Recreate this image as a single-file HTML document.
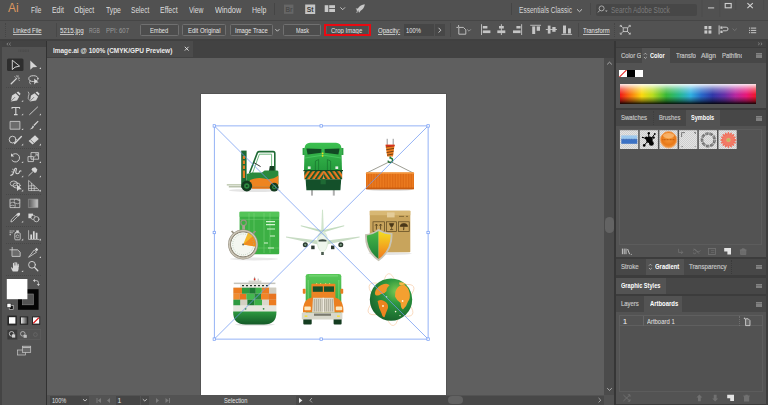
<!DOCTYPE html>
<html>
<head>
<meta charset="utf-8">
<title>Image.ai</title>
<style>
html,body{margin:0;padding:0;}
body{width:768px;height:405px;overflow:hidden;background:#525252;position:relative;font-family:"Liberation Sans",sans-serif;font-size:8px;color:#dcdcdc;}
.a{position:absolute;}
.t{position:absolute;white-space:nowrap;line-height:10px;transform-origin:0 0;}
.m{font-size:8.400px;color:#dedede;top:4.800px;}
.c{font-size:7.200px;color:#e6e6e6;top:25.500px;}
.btn{position:absolute;top:24.200px;height:11.400px;border:0.700px solid #707070;border-radius:1.500px;background:#4d4d4d;box-sizing:border-box;}
.u{text-decoration:underline;text-decoration-thickness:0.600px;text-underline-offset:0.500px;text-decoration-color:#bcbcbc;}
.ptab{transform-origin:0 0;position:absolute;font-size:7.4px;color:#c4c4c4;-webkit-text-stroke:0.2px #c4c4c4;white-space:nowrap;line-height:10px;}
.ptab.on{color:#fff;font-weight:bold;-webkit-text-stroke:0;}
.mi{width:6px;height:4.500px;background:linear-gradient(to bottom,#838383 0,#838383 1.200px,#6e6e6e 1.200px,#6e6e6e 1.700px,#808080 1.700px,#808080 2.800px,#6e6e6e 2.800px,#6e6e6e 3.300px,#808080 3.300px);}
</style>
</head>
<body>
<!-- menu bar -->
<div class="a" style="left:0;top:0;width:768px;height:20px;background:#515151;"></div>
<div class="t" style="left:7.700px;top:0.200px;font-size:13.200px;line-height:16px;color:#dc9660;transform:scale(0.9,1);">Ai</div>
<div class="t m" style="left:30.800px;transform:scaleX(0.770);">File</div>
<div class="t m" style="left:52.100px;transform:scaleX(0.824);">Edit</div>
<div class="t m" style="left:74.200px;transform:scaleX(0.838);">Object</div>
<div class="t m" style="left:105.600px;transform:scaleX(0.815);">Type</div>
<div class="t m" style="left:131.300px;transform:scaleX(0.786);">Select</div>
<div class="t m" style="left:160.400px;transform:scaleX(0.828);">Effect</div>
<div class="t m" style="left:189px;transform:scaleX(0.805);">View</div>
<div class="t m" style="left:214.500px;transform:scaleX(0.883);">Window</div>
<div class="t m" style="left:251.500px;transform:scaleX(0.830);">Help</div>
<div class="a" style="left:274.200px;top:3px;width:1px;height:12px;background:#454545;"></div>
<div class="a" style="left:511px;top:3px;width:1px;height:12px;background:#454545;"></div>
<div class="a" style="left:589.500px;top:3px;width:1px;height:12px;background:#484848;"></div>
<div class="t m" style="left:518.900px;color:#d4d4d4;transform:scaleX(0.785);">Essentials Classic</div>
<div class="a" style="left:596px;top:3.500px;width:101px;height:12px;background:#474747;border-radius:2px;"></div>
<div class="t m" style="left:611px;color:#7c7c7c;transform:scaleX(0.775);">Search Adobe Stock</div>
<svg class="a" style="left:270px;top:0;" width="498" height="20" viewBox="270 0 498 20">
<!-- Br -->
<rect x="284" y="4.600" width="9.400" height="9.200" fill="#666"/>
<!-- St -->
<rect x="305.200" y="4.500" width="10" height="9.500" fill="#c4c4c4"/>
<!-- layout -->
<rect x="324.700" y="5.200" width="3.600" height="6.800" fill="#c8c8c8"/><rect x="329.200" y="5.200" width="5.800" height="2.900" fill="#c8c8c8"/><rect x="329.200" y="9" width="5.800" height="3" fill="#c8c8c8"/>
<path d="M340.400 7.400l2.300 2.300l2.300-2.300M577 9.300l2.500 2.400l2.500-2.400" fill="none" stroke="#d0d0d0" stroke-width="0.900"/>
<!-- rocket -->
<path d="M364.800 4.200 Q360.400 4.600 357.800 8.600 L355.600 8.400 L357 10 L356.400 11.600 L358.600 10.600 L359 13 L360.600 10.800 Q364.400 8.600 364.800 4.200 Z" fill="#c8c8c8"/>
<path d="M356.600 12.800 L358.400 11" stroke="#c8c8c8" stroke-width="0.900"/>
<!-- search icon -->
<circle cx="601.600" cy="8.400" r="2.500" fill="none" stroke="#b4b4b4" stroke-width="0.900"/><path d="M599.800 10.400l-1.800 2" stroke="#b4b4b4" stroke-width="1"/><path d="M605 10.600h2.600l-1.300 1.500z" fill="#b4b4b4"/>
<!-- window controls -->
<path d="M702 0v17M719.800 0v17M735.700 0v10M763.600 0v10" stroke="#4a4a4a" stroke-width="0.600"/>
<rect x="708" y="7" width="6.200" height="1.700" fill="#9c9c9c"/>
<rect x="725.200" y="3.500" width="6" height="4.300" fill="none" stroke="#cfcfcf" stroke-width="1.100"/>
<path d="M747.400 3.200l5.400 5M752.800 3.200l-5.400 5" stroke="#d4d4d4" stroke-width="1.100"/>
</svg>
<div class="t" style="left:285.400px;top:4.600px;font-size:6.400px;line-height:9px;color:#4a4a4a;font-weight:bold;">Br</div>
<div class="t" style="left:306.800px;top:4.600px;font-size:6.800px;line-height:9px;color:#3a3a3a;font-weight:bold;">St</div>
<div class="a" style="left:0;top:19.500px;width:768px;height:1px;background:#464646;"></div>
<!-- control bar -->
<div class="a" style="left:0;top:20.500px;width:768px;height:19.500px;background:#525252;"></div>
<div class="a" style="left:5px;top:23px;width:0;height:14px;border-left:1px dotted #454545;"></div>
<div class="t c u" style="left:12.600px;transform:scaleX(0.823);">Linked File</div>
<div class="a" style="left:55.500px;top:23px;width:1px;height:14px;background:#484848;"></div>
<div class="t c u" style="left:60px;transform:scaleX(0.859);">5215.jpg</div>
<div class="t c" style="left:89.200px;color:#9c9c9c;transform:scaleX(0.693);">RGB</div>
<div class="t c" style="left:106.200px;color:#9c9c9c;transform:scaleX(0.834);">PPI: 607</div>
<div class="btn" style="left:140px;width:38.500px;"></div>
<div class="btn" style="left:182px;width:43.500px;"></div>
<div class="btn" style="left:229.500px;width:43.800px;"></div>
<div class="btn" style="left:283.400px;width:38px;"></div>
<div class="btn" style="left:326px;width:42.500px;border-color:#5c5c5c;"></div>
<div class="t c" style="left:150px;transform:scaleX(0.803);">Embed</div>
<div class="t c" style="left:187.500px;transform:scaleX(0.830);">Edit Original</div>
<div class="t c" style="left:235px;transform:scaleX(0.821);">Image Trace</div>
<div class="t c" style="left:296px;transform:scaleX(0.756);">Mask</div>
<div class="t c" style="left:331px;transform:scaleX(0.831);">Crop Image</div>
<div class="a" style="left:324px;top:23.800px;width:46.600px;height:12.600px;border:2.100px solid #e80a12;box-sizing:border-box;"></div>
<div class="t c u" style="left:378px;transform:scaleX(0.842);">Opacity:</div>
<div class="a" style="left:404px;top:24.400px;width:29.800px;height:11.800px;background:#464646;"></div>
<div class="t c" style="left:406.200px;transform:scaleX(0.805);">100%</div>
<div class="a" style="left:434.700px;top:24.400px;width:10.200px;height:11.800px;background:#474747;"></div>
<div class="a" style="left:449.500px;top:23px;width:1px;height:14px;background:#484848;"></div>
<div class="a" style="left:578.200px;top:23px;width:1px;height:14px;background:#484848;"></div>
<div class="a" style="left:613.500px;top:23px;width:0;height:14px;border-left:1px dotted #454545;"></div>
<div class="t c u" style="left:583px;transform:scaleX(0.819);">Transform</div>
<svg class="a" style="left:270px;top:20px;" width="498" height="20" viewBox="270 20 498 20">
<g fill="none" stroke="#d4d4d4" stroke-width="0.900">
<path d="M275.400 29.200l2 2l2-2"/>
<path d="M438.600 27.800l2.200 2.400l-2.200 2.400"/>
<path d="M467.200 29.400l1.800 1.800l1.800-1.800" stroke="#a8a8a8" stroke-width="0.800"/>
</g>
<!-- right control icons -->
<g fill="none" stroke="#c8c8c8" stroke-width="0.900">
<rect x="623.200" y="27.800" width="4.400" height="3.800"/>
<path d="M620.400 25.600l2.200 1.800M630.200 25.600l-2.200 1.800M620.400 34l2.200-1.800M630.200 34l-2.200-1.800" stroke-width="1"/>
<path d="M620.200 27v-1.600h1.800M630.400 27v-1.600h-1.800M620.200 32.600v1.600h1.800M630.400 32.600v1.600h-1.800" stroke-width="0.700"/>
<path d="M732.600 28.600l2.100 2l2.100-2" stroke="#7a7a7a" stroke-width="0.800"/>
<path d="M723 27.200h3.200a1.800 1.800 0 0 1 0 3.600h-3.200" stroke-width="1"/>
</g>
<g fill="#c8c8c8">
<rect x="704.400" y="26" width="2.900" height="3.200"/><rect x="708.500" y="26" width="2.900" height="3.200"/><rect x="704.400" y="30.400" width="2.900" height="3.200"/><rect x="708.500" y="30.400" width="2.900" height="3.200"/>
<rect x="718.600" y="25.400" width="1" height="9"/><rect x="720.400" y="26.400" width="2.200" height="2.400"/><rect x="720.400" y="30.600" width="2.200" height="2.400"/>
<rect x="749" y="27.600" width="1" height="1"/><rect x="749" y="29.900" width="1" height="1"/><rect x="749" y="32.200" width="1" height="1"/>
<rect x="750.800" y="27.600" width="5.400" height="1"/><rect x="750.800" y="29.900" width="5.400" height="1"/><rect x="750.800" y="32.200" width="5.400" height="1"/>
</g>
<!-- isolate/crop icon -->
<g fill="none" stroke="#c8c8c8" stroke-width="0.900"><path d="M458.600 25v2M456.400 27.400h2"/><path d="M458.800 27.400h4.600l2.400 2.400v4.400h-7z"/></g>
<!-- align icons -->
<g fill="#c4c4c4">
<rect x="481" y="24.200" width="0.900" height="10.800"/><rect x="482.800" y="26" width="4.600" height="2.500"/><rect x="482.800" y="30.400" width="7.600" height="2.700"/>
<rect x="500.900" y="24.200" width="0.900" height="10.800"/><rect x="499" y="26" width="4.800" height="2.500"/><rect x="497.300" y="30.400" width="8" height="2.700"/>
<rect x="521.200" y="24.200" width="0.900" height="10.800"/><rect x="516.400" y="26" width="4.200" height="2.500"/><rect x="513" y="30.400" width="7.600" height="2.700"/>
<rect x="530.200" y="24.800" width="10.800" height="0.900"/><rect x="532.200" y="26.400" width="3" height="7.600"/><rect x="536.700" y="26.400" width="3.300" height="4.400"/>
<rect x="545.800" y="29.100" width="11.200" height="0.900"/><rect x="547.800" y="25.600" width="2.700" height="8"/><rect x="552.300" y="27" width="3.300" height="4.800"/>
<rect x="561.500" y="33.900" width="10.600" height="0.900"/><rect x="563" y="25.500" width="3" height="8"/><rect x="568" y="28.400" width="2.900" height="5.100"/>
</g>
</svg>
<div class="a" style="left:0;top:39.400px;width:768px;height:1.600px;background:#404040;"></div>

<!-- left toolbar -->
<div class="a" style="left:0;top:41px;width:47px;height:364px;background:#535353;"></div>
<div class="a" style="left:0;top:41px;width:2.400px;height:364px;background:#444444;"></div>
<div class="a" style="left:2.400px;top:41px;width:43.600px;height:6px;background:#434343;"></div>
<div class="a" style="left:45.900px;top:41px;width:1.100px;height:364px;background:#323232;"></div>
<svg class="a" style="left:0;top:0;" width="48" height="405" viewBox="0 0 48 405" id="tools">
<g fill="none" stroke="#d6d6d6" stroke-width="1" stroke-linecap="round" stroke-linejoin="round">
<!-- collapse -->
<path d="M8 43 L6.800 44.100 L8 45.200 M10.400 43 L9.200 44.100 L10.400 45.200" stroke="#a4a4a4" stroke-width="0.600"/>
<!-- grip -->
<path d="M18.5 50 H29.5 M18.5 51.4 H29.5" stroke="#474747" stroke-width="0.8" stroke-dasharray="0.8 0.8" stroke-linecap="butt"/>
<!-- separators -->
<g stroke="#444" stroke-width="0.8" stroke-dasharray="1 1" stroke-linecap="butt">
<path d="M6 87.5H41.5M6 148.5H41.5M6 194.5H41.5M6 226.5H41.5M6 243.5H41.5M6 275.5H41.5"/>
</g>
<!-- selection (active) -->
<rect x="7" y="58.5" width="16.5" height="12.5" rx="1.5" fill="#2e2e2e" stroke="none"/>
<path d="M12.3 60.6 V69.6 L15 67.2 L19.2 66.2 Z" stroke="#e0e0e0" stroke-width="0.9"/>
<!-- direct selection -->
<path d="M30.3 60.4 V69.8 L33 67.2 L37.2 67 Z" fill="#d6d6d6" stroke="none"/>
<!-- magic wand -->
<path d="M11.2 83.8 L16.4 78.6" stroke-width="1.3"/>
<path d="M18 75.6v1.6M19.6 78.2h-1.4M14.8 76.6l.9.9M19.4 80.6l-.8-.8M16.6 75.8l.4.8" stroke-width="0.7"/>
<!-- lasso -->
<ellipse cx="33.4" cy="78.6" rx="4.6" ry="2.9" stroke-width="0.9"/>
<path d="M30 80.8 q-1.4 1.6 .4 3.2" stroke-width="0.8"/>
<path d="M34.2 78.4 v6 l1.6 -1.6 l2.8 -.2 Z" fill="#d6d6d6" stroke="none"/>
<!-- pen -->
<path d="M10.8 101.4 l1.2 -6 l3.6 -2.2 l3.6 3.6 l-2.2 3.6 Z" fill="#d6d6d6" stroke="none"/>
<path d="M16.6 92.4 l1.6 -1 l2.4 2.4 l-1 1.6 Z" fill="#d6d6d6" stroke="none"/>
<path d="M11 101.2 l3.8 -3.8" stroke="#535353" stroke-width="0.7"/>
<!-- curvature -->
<path d="M29.8 101.4 l1.2 -6 l3.6 -2.2 l3.6 3.6 l-2.2 3.6 Z" fill="#d6d6d6" stroke="none"/>
<path d="M35.6 92.4 l1.6 -1 l2.4 2.4 l-1 1.6 Z" fill="#d6d6d6" stroke="none"/>
<path d="M30 101.2 l3.8 -3.8" stroke="#535353" stroke-width="0.7"/>
<path d="M28.4 92 q1.6 2 0 4.200 q-1.200 2.400 1.400 4.400" stroke-width="0.7"/>
<!-- type -->
<path d="M12 108.800 V107.500 H19.600 V108.800 M15.800 107.500 V114.400 M14 114.600 H17.600" stroke-width="1.1" stroke-linecap="butt"/>
<!-- line -->
<path d="M29.600 114.600 L37.600 107" stroke-width="0.9"/>
<!-- rect -->
<rect x="10.500" y="121.400" width="9.400" height="7.800" fill="#6c6c6c" stroke-width="0.8"/>
<!-- brush -->
<path d="M33.400 125 L37.800 120.800 L38.600 121.600 L34.400 126 Z" fill="#d6d6d6" stroke="none"/>
<path d="M32.800 125.400 l1.400 1.400 q-1.400 2.600 -4.600 2.600 q2.400 -1.400 3.200 -4 Z" fill="#d6d6d6" stroke="none"/>
<!-- shaper -->
<circle cx="12.600" cy="139.600" r="3.400" stroke-width="0.9"/>
<path d="M14.600 143.400 L21.400 136.400" stroke-width="1.400"/>
<!-- eraser -->
<path d="M28.600 141 L35 135.200 L38.800 139 L32.600 144.600 Z" fill="#d6d6d6" stroke="none"/>
<path d="M30.400 139.600 L34 143.200" stroke="#535353" stroke-width="0.7"/>
<!-- rotate -->
<path d="M12.400 154.800 A4.200 4.200 0 1 1 12 160.400" stroke-width="0.9"/>
<path d="M11 153.200 V156.400 H14.200 Z" fill="#d6d6d6" stroke="none"/>
<!-- scale -->
<rect x="31.400" y="152.600" width="7.200" height="6.600" stroke-width="0.8"/>
<rect x="28.400" y="156.600" width="5" height="5" stroke-width="0.8"/>
<path d="M34.400 157 L37.200 154.200 M35.400 154 H37.400 V156" stroke-width="0.7"/>
<!-- width/warp -->
<path d="M10.800 175.400 q2.400 -.6 3 -3.600 q.6 -3.600 2 -3.600 q1 0 .2 2.600 q-.8 3 1.400 3 q1.600 0 2 -1.800 q.4 -1.400 1.600 -1" stroke-width="1.100"/>
<path d="M12.400 169.200 l2.200 1.400 M11.800 171.800 l1.800 .4" stroke-width="0.7"/>
<!-- pin -->
<path d="M32.400 168 L35.200 167.200 L37.400 169.600 L36.400 172.200 L34.800 173 L31.400 169.800 Z" fill="#d6d6d6" stroke="none"/>
<path d="M32.600 172 L28.800 175.600" stroke-width="0.9"/>
<!-- shape builder -->
<ellipse cx="13.800" cy="183.600" rx="3.600" ry="2.600" stroke-width="0.8"/>
<ellipse cx="16.600" cy="185.400" rx="3.600" ry="2.600" stroke-width="0.8"/>
<path d="M17 184.600 V191 L18.800 189.400 L21.800 189.200 Z" fill="#d6d6d6" stroke="none"/>
<!-- perspective -->
<path d="M28.600 180.800 V190.600 H39.200 Z M28.600 186 L33.800 185.600 M31.400 183.400 V190.600 M34.200 186 V190.600 M28.600 188.400 H36.800" stroke-width="0.7"/>
<!-- mesh -->
<rect x="10.400" y="199.200" width="9.400" height="8.400" stroke-width="0.8"/>
<path d="M10.400 203 q2.400 -1.600 4.600 0 q2.400 1.600 4.800 0 M14.800 199.200 q-1.400 2.200 0 4.200 q1.400 2 0 4.200 M10.400 205.600 q2 -.8 4 0 M16.600 199.200 q1 1.600 3.200 1.600" stroke-width="0.6"/>
<!-- gradient tool -->
<rect x="28.800" y="199.200" width="9.200" height="8.400" fill="url(#gt)" stroke="#9a9a9a" stroke-width="0.6"/>
<!-- eyedropper -->
<path d="M11 221.600 L11.400 219.800 L16.200 215 L17.600 216.400 L12.800 221.200 Z" stroke-width="0.8"/>
<path d="M16 214.200 L18.400 216.600 L20 215 Q20.600 213.400 19.400 212.800 Q18 212.600 17.600 213.200 Z" fill="#d6d6d6" stroke="none"/>
<!-- blend -->
<rect x="28.400" y="213.600" width="4.600" height="4.600" fill="#d6d6d6" stroke="none"/>
<circle cx="33.200" cy="217.400" r="2.200" fill="#535353" stroke-width="0.7"/>
<circle cx="36.400" cy="219.200" r="2.600" fill="#535353" stroke-width="0.8"/>
<!-- symbol sprayer -->
<rect x="14.800" y="232.800" width="5.400" height="7" rx="0.800" stroke-width="0.8"/>
<rect x="16.200" y="230.400" width="2.600" height="2.400" fill="#d6d6d6" stroke="none"/>
<path d="M18.600 235.400 a1.400 1.400 0 1 0 0 1.800" stroke-width="0.7"/>
<path d="M10.200 231h.01M12 231h.01M13.800 231h.01M10.200 232.800h.01M12 232.800h.01M10.200 234.600h.01" stroke-width="1.100" stroke-linecap="square"/>
<!-- graph -->
<path d="M28.600 230.600 V239.400 H39.200" stroke-width="0.7"/>
<path d="M31.200 239 V234.400 M33.800 239 V231.200 M36.600 239 V232.800" stroke-width="1.700" stroke-linecap="butt"/>
<!-- artboard -->
<path d="M12.200 247.400 V249.400 M9.800 249.800 H12" stroke-width="0.8"/>
<path d="M12.400 249.800 H17.600 L20.200 252.200 V256.400 H12.400 Z" fill="#6c6c6c" stroke-width="0.8"/>
<!-- slice -->
<path d="M28.800 257 L34.200 250 L36.200 252 Z" stroke-width="0.8"/>
<path d="M34.800 249.400 L36.400 247.800 L38.200 249.600 L36.800 251.400 Z" fill="#d6d6d6" stroke="none"/>
<!-- hand -->
<path d="M12.800 271.400 Q11.600 269.600 11 267.800 Q11.200 267 12 267.400 L13 268.800 V265.400 H18.600 V268.400 Q18.600 270.200 17.600 271.400 Z" fill="#d6d6d6" stroke="none"/>
<path d="M13.500 266 V263.400 M15.100 266 V262.500 M16.700 266 V262.900 M18.200 266.400 V264.200" stroke-width="1.100"/>
<!-- zoom -->
<circle cx="32" cy="264.800" r="3.400" stroke-width="0.9"/>
<path d="M34.600 267.400 L37.800 270.800" stroke-width="1.300"/>
</g>
<!-- corner triangles -->
<g fill="#cfcfcf">
<path d="M41 69h-1.800L41 67.200Z M23.200 101.800h-1.800l1.800-1.800Z M23.200 115.200h-1.800l1.800-1.800Z M41 115.200h-1.800l1.800-1.800Z M23.200 130h-1.800l1.800-1.800Z M41 130h-1.800l1.800-1.800Z M23.200 145.400h-1.800l1.800-1.800Z M41 145.400h-1.800l1.800-1.800Z M23.200 163h-1.800l1.800-1.800Z M41 163h-1.800l1.800-1.800Z M23.200 177.200h-1.800l1.800-1.800Z M41 177.200h-1.800l1.800-1.800Z M23.200 191.400h-1.800l1.800-1.800Z M41 191.400h-1.800l1.800-1.800Z M23.200 222.600h-1.800l1.800-1.800Z M23.200 240.400h-1.800l1.800-1.800Z M41 240.400h-1.800l1.800-1.800Z M41 258h-1.800l1.800-1.800Z M23.200 272h-1.800l1.800-1.800Z"/>
</g>
<defs>
<linearGradient id="gt" x1="0" x2="1" y1="0" y2="0"><stop offset="0" stop-color="#5a5a5a"/><stop offset="1" stop-color="#c8c8c8"/></linearGradient>
<linearGradient id="gb" x1="0" x2="1" y1="0" y2="0"><stop offset="0" stop-color="#e8e8e8"/><stop offset="1" stop-color="#4a4a4a"/></linearGradient>
</defs>
<!-- fill/stroke -->
<rect x="18" y="289.200" width="20.600" height="20.600" fill="#050505"/>
<rect x="22.500" y="294" width="10.800" height="10.800" fill="#535353" stroke="#8a8a8a" stroke-width="0.6"/>
<rect x="6.800" y="279" width="20.600" height="20.200" fill="#ffffff"/>
<path d="M33.400 280.600 h3 a2 2 0 0 1 2 2 v2.600" fill="none" stroke="#d0d0d0" stroke-width="0.8"/>
<path d="M33 280.600 l2 -1.600 v3.200 Z M38.400 286 l-1.600 -2 h3.200 Z" fill="#d0d0d0"/>
<rect x="9.200" y="305.600" width="4" height="4" fill="#111" stroke="#ddd" stroke-width="0.6"/>
<rect x="7" y="303.400" width="4" height="4" fill="#fff" stroke="#222" stroke-width="0.5"/>
<!-- color buttons -->
<rect x="7.400" y="315.600" width="9.400" height="9.800" fill="#262626"/>
<rect x="9" y="317.200" width="6.400" height="6.400" fill="#fff"/>
<rect x="19.800" y="316.400" width="8.400" height="8.400" fill="#262626"/>
<rect x="21" y="317.400" width="6" height="6.200" fill="url(#gb)"/>
<rect x="32" y="316.400" width="8.200" height="8.400" fill="#262626"/>
<rect x="33" y="317.400" width="6.200" height="6.200" fill="#fff"/>
<path d="M33.200 323.400 L39 317.600" stroke="#e01010" stroke-width="1.300"/>
<!-- draw modes -->
<rect x="7.300" y="329.600" width="33.400" height="10" fill="none" stroke="#5f5f5f" stroke-width="0.6"/>
<rect x="7.300" y="329.600" width="10.400" height="10" fill="#3a3a3a"/>
<path d="M17.700 329.600v10M29 329.600v10" stroke="#5f5f5f" stroke-width="0.5"/>
<circle cx="11.600" cy="333.800" r="2.300" fill="none" stroke="#d0d0d0" stroke-width="0.8"/>
<rect x="12" y="334.400" width="3.200" height="3.200" fill="#d0d0d0"/>
<circle cx="22.800" cy="333.800" r="2.300" fill="none" stroke="#c0c0c0" stroke-width="0.8"/>
<rect x="23.600" y="334.800" width="3.200" height="3" fill="#c0c0c0"/>
<circle cx="35.400" cy="334.600" r="1.900" fill="none" stroke="#6a6a6a" stroke-width="0.7"/>
<!-- screen mode -->
<rect x="17.500" y="350" width="8" height="5" fill="#5e5e5e" stroke="#c8c8c8" stroke-width="0.7"/>
<rect x="22.500" y="346.200" width="8.200" height="6.400" fill="#6a6a6a" stroke="#c8c8c8" stroke-width="0.7"/>
<path d="M22.500 347.400h8.200" stroke="#c8c8c8" stroke-width="0.9"/>
</svg>

<!-- doc tab bar -->
<div class="a" style="left:47px;top:41px;width:568px;height:17px;background:#424242;"></div>
<div class="a" style="left:47px;top:41px;width:146px;height:16px;background:#4b4b4b;"></div>
<div class="t" style="left:53px;top:45.500px;font-size:7px;font-weight:bold;color:#ececec;transform:scaleX(0.922);">Image.ai @ 100% (CMYK/GPU Preview)</div>
<svg class="a" style="left:184px;top:46px;" width="6" height="6" viewBox="0 0 6 6"><path d="M.8 .8L4.600 4.600M4.600 .8L.8 4.600" stroke="#e6e6e6" stroke-width="0.9"/></svg>

<!-- canvas -->
<div class="a" style="left:47px;top:57.500px;width:557.200px;height:337.500px;background:#5f5f5f;"></div>
<div class="a" style="left:201.200px;top:93.800px;width:244.800px;height:300.900px;background:#fff;box-shadow:0 0 0 0.500px #4a4a4a;"></div>

<svg class="a" style="left:201px;top:94px;" width="245" height="301" viewBox="201 94 245 301">
<defs>
<linearGradient id="cont" x1="0" x2="1"><stop offset="0" stop-color="#f08428"/><stop offset="1" stop-color="#e06c14"/></linearGradient>
<pattern id="ribs" width="1.600" height="4" patternUnits="userSpaceOnUse"><rect width="1.600" height="4" fill="#ec7c20"/><rect width="0.600" height="4" fill="#d86410"/></pattern>
<pattern id="chev" width="5" height="8.500" patternUnits="userSpaceOnUse" patternTransform="skewX(-35)"><rect width="5" height="8.500" fill="#f07820"/><rect width="2.400" height="8.500" fill="#1a5a2c"/></pattern>
<pattern id="chev2" width="5" height="8.500" patternUnits="userSpaceOnUse" patternTransform="skewX(35)"><rect width="5" height="8.500" fill="#f07820"/><rect width="2.400" height="8.500" fill="#1a5a2c"/></pattern>
<radialGradient id="globe" cx="0.620" cy="0.300" r="0.800"><stop offset="0" stop-color="#7cc850"/><stop offset="0.350" stop-color="#2e9a40"/><stop offset="1" stop-color="#145a28"/></radialGradient>
<linearGradient id="shR" x1="0" x2="0" y1="0" y2="1"><stop offset="0" stop-color="#f4e020"/><stop offset="1" stop-color="#f07820"/></linearGradient>
<linearGradient id="shL" x1="0" x2="0" y1="0" y2="1"><stop offset="0" stop-color="#48b848"/><stop offset="1" stop-color="#1e8038"/></linearGradient>
<linearGradient id="hull" x1="0" x2="0" y1="0" y2="1"><stop offset="0" stop-color="#2e9a40"/><stop offset="1" stop-color="#145a28"/></linearGradient>
<linearGradient id="trl" x1="0" x2="0" y1="0" y2="1"><stop offset="0" stop-color="#58c858"/><stop offset="1" stop-color="#2ea03c"/></linearGradient>
<linearGradient id="trn" x1="0" x2="0" y1="0" y2="1"><stop offset="0" stop-color="#3cc050"/><stop offset="1" stop-color="#249a3c"/></linearGradient>
<radialGradient id="sw" cx="0.500" cy="0.500" r="0.500"><stop offset="0.780" stop-color="#f4f6f0"/><stop offset="0.820" stop-color="#8a8474"/><stop offset="0.920" stop-color="#d4cec0"/><stop offset="1" stop-color="#8c8676"/></radialGradient>
</defs>

<!-- forklift -->
<g>
<ellipse cx="255" cy="190.400" rx="26" ry="1.600" fill="#d8d8d8" opacity="0.700"/>
<rect x="226.800" y="184.200" width="16" height="1.300" fill="#b8c4a8"/>
<rect x="228.800" y="186.200" width="14" height="1.200" fill="#a8b498"/>
<rect x="241.200" y="150.600" width="5.400" height="37" fill="#1e6a34"/>
<rect x="242.800" y="156" width="2.200" height="22" fill="#e87c20"/>
<rect x="242.800" y="159" width="2.200" height="1.500" fill="#1e6a34"/><rect x="242.800" y="164" width="2.200" height="1.500" fill="#1e6a34"/><rect x="242.800" y="169" width="2.200" height="1.500" fill="#1e6a34"/>
<path d="M249.600 173 L257.400 152.600 Q258 151.600 259.400 151.600 H273.200 Q274.800 151.600 274.800 153.400 V171" fill="none" stroke="#1e6a34" stroke-width="1.600"/>
<path d="M252.600 173 L259.400 154.200 H271.600 V170" fill="none" stroke="#4ea860" stroke-width="0.800"/>
<path d="M253.800 162.600 L260.600 166.600" stroke="#222" stroke-width="0.900"/>
<path d="M269.800 166 h4.400 v6 h-5.400 z" fill="#163e22"/>
<path d="M246.600 174 L252 172.400 H262 L264.600 170.400 H277.200 Q278.400 170.400 278.400 172 V184 Q278.400 186.400 276 186.400 H246.600 Z" fill="#2a8a3c"/>
<path d="M250 180 Q258 176.800 264 178.600 Q272 180.600 278.400 175.600 V184 Q278.400 186.400 276 186.400 H248.400 Z" fill="#ee8420"/>
<path d="M252 186.400 H270 V188.800 H252 Z" fill="#e07418"/>
<circle cx="246.800" cy="186" r="5.400" fill="#143c20"/><circle cx="246.800" cy="186" r="2.700" fill="#2e8a40"/><circle cx="246.800" cy="186" r="1.100" fill="#143c20"/>
<circle cx="274.200" cy="187.200" r="4.400" fill="#143c20"/><circle cx="274.200" cy="187.200" r="2.100" fill="#2e8a40"/><circle cx="274.200" cy="187.200" r="0.900" fill="#143c20"/>
</g>

<!-- train -->
<g>
<rect x="311" y="189" width="2" height="6.600" fill="#b0b0b0"/><rect x="332.800" y="189" width="2" height="6.600" fill="#b0b0b0"/>
<path d="M304 170.800 L304.600 148 Q305 143 310 142.800 H336 Q341 143 341.400 148 L342 170.800 Z" fill="url(#trn)"/>
<rect x="302.600" y="148" width="2.200" height="7" fill="#2aa040"/><rect x="341.200" y="148" width="2.200" height="7" fill="#2aa040"/>
<path d="M306.400 148.400 L321.400 149 V152.800 L307.600 154.600 Z" fill="#124a24"/>
<path d="M339.600 148.400 L324.600 149 V152.800 L338.400 154.600 Z" fill="#124a24"/>
<path d="M315.400 170.800 V161 L318.600 159.600 V170.800 M330.600 170.800 V161 L327.400 159.600 V170.800" fill="none" stroke="#1a7a30" stroke-width="0.800"/>
<path d="M305 158 L321 155.400 H325 L341 158" fill="none" stroke="#52d068" stroke-width="0.700"/>
<circle cx="322.600" cy="153.400" r="0.900" fill="#f4e020"/><circle cx="322.600" cy="155.800" r="0.900" fill="#f4e020"/>
<rect x="307.800" y="166.400" width="2.800" height="2.600" fill="#e8f0e8"/><rect x="335.400" y="166.400" width="2.800" height="2.600" fill="#e8f0e8"/>
<rect x="304.200" y="170.800" width="19" height="8.500" fill="url(#chev)"/>
<rect x="323.200" y="170.800" width="19" height="8.500" fill="url(#chev2)"/>
<rect x="303.400" y="170" width="39.600" height="1.200" fill="#124a24"/>
<path d="M305.600 179.300 H341.200 L340.400 190.200 H306.400 Z" fill="#14502a"/>
<rect x="320.600" y="179.300" width="5.200" height="5" fill="#1e6a34"/>
</g>

<!-- crane container -->
<g>
<path d="M387.200 138.800 V145 M393.200 138.800 V145" stroke="#8a8a8a" stroke-width="0.900"/>
<path d="M385.600 144.800 H394.600 L393 156.400 H387.200 Z" fill="#ec7c20"/>
<path d="M385.800 147 L394.400 145.600 M386.200 149.800 L394 148.400 M386.600 152.600 L393.600 151.200 M387 155.200 L393.200 154" stroke="#6a3c10" stroke-width="0.900"/>
<path d="M385.600 144.800 H394.600 L394.200 146.400 H386 Z" fill="#d83020"/>
<path d="M390.200 156.400 V158 A2.300 2.300 0 1 1 388 160.600" fill="none" stroke="#1e7a34" stroke-width="1.500"/>
<path d="M389.800 161.600 L366.600 173 M390.600 161.600 L413.200 173" stroke="#5a5a4a" stroke-width="0.600"/>
<ellipse cx="390" cy="189.600" rx="23" ry="1.200" fill="#c8c8c8" opacity="0.700"/>
<rect x="366" y="172.400" width="48" height="16.800" rx="0.800" fill="url(#ribs)"/>
<rect x="366" y="172.400" width="48" height="1.400" fill="#f49840"/>
<rect x="366" y="187.600" width="48" height="1.600" fill="#c85c10"/>
</g>

<!-- stopwatch + doc -->
<g>
<ellipse cx="254" cy="259" rx="24" ry="1.400" fill="#d8d8d8" opacity="0.600"/>
<rect x="239.600" y="211.800" width="39.600" height="42.500" rx="1" fill="#3cb044"/>
<rect x="239.600" y="211.800" width="39.600" height="5" fill="#54c458"/>
<path d="M249 213 V253 M254 213 V253 M264 213 V253 M270 213 V253" stroke="#7cd47c" stroke-width="0.500"/>
<path d="M240 219.400 H279 M240 248 H279" stroke="#7cd47c" stroke-width="0.400"/>
<path d="M266 221.600 h9 M266 224.600 h9 M267 229 h8 M270 236 h5 M264 243 h4 M268 248 h6" stroke="#d4f4d0" stroke-width="1.100"/>
<circle cx="243.600" cy="222.800" r="2.700" fill="none" stroke="#9a9484" stroke-width="1.100"/>
<rect x="242.200" y="225.200" width="2.800" height="4.600" fill="#a8a292"/>
<path d="M231.600 231 L234.400 234 M255.400 231 L252.600 234" stroke="#9a9484" stroke-width="1.800"/>
<circle cx="243.100" cy="244.400" r="15" fill="url(#sw)"/>
<path d="M243.100 244.400 L248 232.800 A12.400 12.400 0 0 1 255.400 246.400 Z" fill="#f4b828"/>
<path d="M243.100 244.400 L252.600 236.400 A12.400 12.400 0 0 1 255.400 246.400 Z" fill="#f08c20"/>
<circle cx="243.100" cy="244.400" r="10.400" fill="none" stroke="#9ab8a0" stroke-width="0.700" stroke-dasharray="0.700 1.500"/>
<circle cx="243.100" cy="244.400" r="1" fill="#6a6a5a"/>
</g>

<!-- plane -->
<g>
<path d="M322 209.800 L323 209.800 L323.800 231 H321.200 Z" fill="#cfe4cc"/>
<path d="M300.800 225.200 L321.600 230 L323.400 230 L344.200 225.200 L344.200 226.200 L323 232.400 H322 L300.800 226.200 Z" fill="#c4dcc0"/>
<path d="M286 236.600 L318 240.400 V244.600 L286 237.600 Z" fill="#c8dcc4"/>
<path d="M359.600 236.600 L327 240.400 V244.600 L359.600 237.600 Z" fill="#c8dcc4"/>
<ellipse cx="322.500" cy="241.400" rx="5.600" ry="10.600" fill="#dcecd8"/>
<ellipse cx="322.500" cy="243" rx="4.400" ry="8.600" fill="#eef6ec"/>
<path d="M318.600 240 Q322.500 238.600 326.400 240 V241.400 H318.600 Z" fill="#3a4a40"/>
<circle cx="305.300" cy="244.800" r="2.500" fill="#2a3a30"/><circle cx="305.300" cy="244.800" r="1.100" fill="#7a9a80"/>
<circle cx="340.800" cy="244.800" r="2.500" fill="#2a3a30"/><circle cx="340.800" cy="244.800" r="1.100" fill="#7a9a80"/>
<rect x="311.200" y="245.600" width="3.400" height="3.600" fill="#2e3a32"/><rect x="331" y="245.600" width="3.400" height="3.600" fill="#2e3a32"/>
<rect x="321.200" y="252" width="2.600" height="3" fill="#4a5a4e"/>
</g>

<!-- box + shield -->
<g>
<ellipse cx="390" cy="253.600" rx="22" ry="1.300" fill="#d4d4d4" opacity="0.600"/>
<rect x="369.800" y="210.800" width="40.500" height="41.500" rx="0.800" fill="#c8a45c"/>
<rect x="369.800" y="210.800" width="40.500" height="4.400" fill="#d8b874"/>
<rect x="387" y="212.400" width="7.600" height="5" fill="#e4cc98"/>
<path d="M399 216.400 h5 M406 216.400 h2" stroke="#6a5428" stroke-width="0.700"/>
<g fill="none" stroke="#5a4620" stroke-width="0.700"><rect x="373" y="221.800" width="11.400" height="9.800"/><rect x="386.600" y="221.800" width="10" height="9.800"/><rect x="398.600" y="221.800" width="10.600" height="9.800"/></g>
<path d="M376.400 229.600 V224.400 M375.200 225.600 L376.400 224 L377.600 225.600 M380.600 229.600 V224.400 M379.400 225.600 L380.600 224 L381.800 225.600" stroke="#4a3818" stroke-width="0.800" fill="none"/>
<path d="M389.400 223.600 H393.800 L392.600 226.400 H390.600 Z M391.600 226.400 V229.400 M390 229.600 H393.200" stroke="#4a3818" stroke-width="0.700" fill="#4a3818"/>
<path d="M400.200 226.400 A3.700 3 0 0 1 407.600 226.400 Z M403.900 226.400 V229.200 Q403.900 230 403 229.800" stroke="#4a3818" stroke-width="0.700" fill="#4a3818"/>
<path d="M378.600 229 Q386 233.400 392.400 233 Q393.600 250.600 378.600 261.200 Q364.400 252 365 234.200 Q372 233.800 378.600 229 Z" fill="#c8c4b4"/>
<path d="M378.600 231 Q372.600 235 366.800 235.600 Q366.800 250.600 378.600 259 Z" fill="url(#shL)"/>
<path d="M378.600 231 Q385.200 234.600 390.600 234.600 Q391 250 378.600 259 Z" fill="url(#shR)"/>
</g>

<!-- ship -->
<g>
<ellipse cx="254.800" cy="324.600" rx="20" ry="1.200" fill="#d0d0d0" opacity="0.600"/>
<path d="M254.600 276.800 v5.600 M258.200 278.600 v3.800" stroke="#8a8a8a" stroke-width="0.600"/>
<rect x="253.800" y="278.400" width="1.600" height="2" fill="#d03020"/>
<rect x="248.600" y="280.600" width="12.800" height="2.200" fill="#d8d8d0"/>
<rect x="233.800" y="282.600" width="41.600" height="1.500" fill="#c4c4bc"/>
<rect x="240" y="284" width="29.600" height="3.800" fill="#ecece4"/>
<path d="M242 285.600 h2 M246 285.600 h2 M250 285.600 h2 M254 285.600 h2 M258 285.600 h2 M262 285.600 h2 M266 285.600 h2" stroke="#2a3a30" stroke-width="1.300"/>
<rect x="233.400" y="287.700" width="42.800" height="17.800" fill="#d8d4c8"/>
<g>
<rect x="233.400" y="287.700" width="8.600" height="6" fill="#ec7c20"/><rect x="233.400" y="293.700" width="6" height="6" fill="#f08c30"/><rect x="239.400" y="293.700" width="7" height="6" fill="#e87420"/>
<rect x="242" y="287.700" width="7.200" height="6" fill="#2e9a40"/><rect x="249.200" y="287.700" width="6.600" height="6" fill="#1e7a34"/><rect x="255.800" y="287.700" width="6" height="6" fill="#3cb048"/>
<rect x="262" y="287.700" width="7.200" height="6" fill="#ec7c20"/><rect x="269.200" y="287.700" width="7" height="6" fill="#d0ccc0"/>
<rect x="246.400" y="293.700" width="8" height="6" fill="#44b850"/><rect x="254.400" y="293.700" width="6.600" height="6" fill="#2a8a3c"/><rect x="261" y="293.700" width="7.200" height="6" fill="#f08428"/><rect x="268.200" y="293.700" width="8" height="6" fill="#e87420"/>
<rect x="233.400" y="299.700" width="7" height="5.800" fill="#2e9a40"/><rect x="240.400" y="299.700" width="7" height="5.800" fill="#d4d0c4"/><rect x="247.400" y="299.700" width="7" height="5.800" fill="#1e7a34"/><rect x="254.400" y="299.700" width="7.600" height="5.800" fill="#3cb048"/><rect x="262" y="299.700" width="7" height="5.800" fill="#dcd8cc"/><rect x="269" y="299.700" width="7.200" height="5.800" fill="#ec7c20"/>
</g>
<path d="M233.200 305.500 H276.400 V312 H233.200 Z" fill="#e6e6de"/>
<path d="M233.200 311.400 H276.400 Q277 324.400 264 324.400 H245.600 Q232.600 324.400 233.200 311.400 Z" fill="url(#hull)"/>
<circle cx="245.600" cy="308.800" r="0.900" fill="#3a8a48"/><circle cx="263.600" cy="308.800" r="0.900" fill="#3a8a48"/>
</g>

<!-- truck -->
<g>
<rect x="305.700" y="273.900" width="35.600" height="44.600" rx="2.400" fill="url(#trl)"/>
<rect x="309" y="275.400" width="29" height="1" fill="#8ce08c" opacity="0.700"/>
<path d="M308.200 280 V316 M338.800 280 V316" stroke="#8ce08c" stroke-width="0.600"/>
<rect x="303.300" y="318" width="8.400" height="6.400" rx="1" fill="#143c20"/><rect x="333.600" y="318" width="8" height="6.400" rx="1" fill="#143c20"/>
<rect x="302.800" y="288.800" width="2.800" height="5" rx="0.800" fill="#e87c20"/><rect x="340.400" y="288.800" width="2.800" height="5" rx="0.800" fill="#e87c20"/>
<path d="M312 283.800 H334.600 Q335.400 283.800 335.400 284.800 V299 H311.400 V284.800 Q311.400 283.800 312 283.800 Z" fill="#ec8424"/>
<rect x="312.800" y="286.400" width="10" height="5.400" fill="#16502a"/><rect x="324" y="286.400" width="10" height="5.400" fill="#16502a"/>
<path d="M316 283.600 h1.200 M320 283.600 h1.200 M325 283.600 h1.200 M329 283.600 h1.200" stroke="#f4c860" stroke-width="0.900"/>
<path d="M303 312.600 Q302.400 299.600 311.600 297.600 H335 Q344 299.600 343.400 312.600 Z" fill="#ec8020"/>
<path d="M313 297.800 H333.600 L334.600 312.400 H312 Z" fill="#d8d4c4"/>
<path d="M314.400 299 V311.400 M316.400 299 V311.400 M318.400 299 V311.400 M320.400 299 V311.400 M322.400 299 V311.400 M324.400 299 V311.400 M326.400 299 V311.400 M328.400 299 V311.400 M330.400 299 V311.400 M332.400 299 V311.400" stroke="#8a8676" stroke-width="0.500"/>
<rect x="322.600" y="297.800" width="1.400" height="14.600" fill="#f0ece0"/>
<rect x="304.400" y="306.600" width="6.400" height="3.600" rx="0.800" fill="#fbe8c0"/><rect x="335.800" y="306.600" width="6.400" height="3.600" rx="0.800" fill="#fbe8c0"/>
<rect x="301.800" y="312.400" width="40.600" height="7" rx="1.200" fill="#d8d8cc"/>
<rect x="314" y="313.600" width="17" height="2.200" fill="#7a7a6e"/>
<rect x="304.600" y="315.400" width="2.800" height="1.600" fill="#f4e040"/><rect x="337" y="315.400" width="2.800" height="1.600" fill="#f4e040"/>
</g>

<!-- globe -->
<g>
<g fill="none" stroke="#f8c8a0" stroke-width="0.600">
<ellipse cx="391" cy="299.600" rx="26" ry="9" transform="rotate(-30 391 299.600)"/>
<ellipse cx="391" cy="299.600" rx="26" ry="9" transform="rotate(35 391 299.600)"/>
<ellipse cx="391" cy="299.600" rx="26" ry="8" transform="rotate(85 391 299.600)"/>
</g>
<circle cx="391" cy="299.600" r="21.200" fill="url(#globe)"/>
<path d="M375.600 290.600 Q378 285.600 384 284 Q388 283 389.600 285.400 Q386 288 386.600 291 Q384 294.600 381 294 Q378 296.600 375.400 295 Q374.400 292.600 375.600 290.600 Z" fill="#f09428"/>
<path d="M377.600 301 Q381.600 298.600 385 301.600 Q388.600 304 388 308 Q386 312.600 384.600 317 Q382.600 318 381.600 313.600 Q378.600 308 377.600 301 Z" fill="#ee8420"/>
<path d="M396.600 289 Q399 284.600 404.600 285 Q408.600 287.600 409.600 293 Q410.600 298 408 301.600 Q406.600 306.600 403 309.600 Q400.600 308 400.600 303 Q396.600 300.600 395 296.600 Q394.600 292 396.600 289 Z" fill="#f4a030"/>
<path d="M399 282.600 Q403 281.600 406 284 Q403 285.600 399.600 285 Z" fill="#f4b848"/>
<g fill="#fff8e0"><circle cx="383" cy="306" r="0.900"/><circle cx="402.600" cy="301" r="0.900"/><circle cx="395.600" cy="311.600" r="0.800"/><circle cx="386.600" cy="297" r="0.700"/><circle cx="400" cy="315.600" r="0.700"/></g>
</g>

<!-- bounding box -->
<g fill="none" stroke="#7199f2" stroke-width="0.750">
<rect x="214.300" y="125.900" width="213.800" height="213.200"/>
<path d="M214.300 125.900 L428.100 339.100 M428.100 125.900 L214.300 339.100"/>
</g>
<g fill="#ffffff" stroke="#6f98f4" stroke-width="0.700">
<rect x="213.1" y="124.7" width="2.400" height="2.400"/><rect x="320.0" y="124.7" width="2.400" height="2.400"/><rect x="426.9" y="124.7" width="2.400" height="2.400"/>
<rect x="213.1" y="231.3" width="2.400" height="2.400"/><rect x="426.9" y="231.3" width="2.400" height="2.400"/>
<rect x="213.1" y="337.9" width="2.400" height="2.400"/><rect x="320.0" y="337.9" width="2.400" height="2.400"/><rect x="426.9" y="337.9" width="2.400" height="2.400"/>
</g>
</svg>


<!-- status bar -->
<div class="a" style="left:47px;top:394.700px;width:568px;height:10.300px;background:#535353;"></div>
<div class="a" style="left:50px;top:396px;width:30.500px;height:9px;background:#464646;"></div>
<div class="t" style="left:52px;top:396px;font-size:6.800px;color:#e0e0e0;transform:scale(0.82,1);">100%</div>
<div class="a" style="left:81px;top:396px;width:8px;height:9px;background:#484848;"></div>
<div class="a" style="left:115.500px;top:396px;width:24px;height:9px;background:#464646;"></div>
<div class="t" style="left:117.500px;top:396px;font-size:6.800px;color:#e0e0e0;">1</div>
<div class="a" style="left:141px;top:396px;width:7.500px;height:9px;background:#484848;"></div>
<div class="t" style="left:224px;top:396px;font-size:6.600px;color:#e0e0e0;transform:scaleX(0.862);">Selection</div>
<div class="a" style="left:295.500px;top:396px;width:10.500px;height:9px;background:#494949;"></div>
<div class="a" style="left:306px;top:396px;width:297.500px;height:9px;background:#484848;"></div>
<div class="a" style="left:448.200px;top:395.900px;width:14.800px;height:8px;background:#626262;border-radius:4px;"></div>
<svg class="a" style="left:47px;top:395px;" width="570" height="10" viewBox="47 395 570 10">
<g fill="none" stroke="#dcdcdc" stroke-width="0.8">
<path d="M83 399.200l2 1.800l2-1.800M142.800 399.200l2 1.800l2-1.800"/>
<path d="M309.800 400.200l2.200-2.200M309.800 400.200l2.200 2.200" stroke="#bdbdbd"/>
<path d="M598.600 398l2.200 2.200l-2.200 2.200" stroke="#bdbdbd"/>
</g>
<g fill="#7a7a7a"><path d="M96.500 398v5h1v-5zM101 398v5l-3.200-2.500zM110 398v5l-3-2.500zM156 398v5l3-2.500zM165.500 398v5l3.200-2.500zM169 398v5h1v-5z"/></g>
<path d="M299 397.800v5.200l3.400-2.600z" fill="#e6e6e6"/>
</svg>

<!-- right scrollbar -->
<div class="a" style="left:604.200px;top:57.500px;width:10px;height:347.500px;background:#4b4b4b;"></div>
<div class="a" style="left:605.100px;top:217.300px;width:8.700px;height:15.300px;background:#636363;border-radius:4.350px;"></div>
<div class="a" style="left:604.200px;top:395px;width:10px;height:10px;background:#535353;"></div>
<svg class="a" style="left:603px;top:58px;" width="12" height="340" viewBox="603 58 12 340"><g fill="none" stroke="#c4c4c4" stroke-width="0.8"><path d="M607.200 64.400l2.300-2.200l2.300 2.200M607.200 388.200l2.300 2.200l2.300-2.200"/></g></svg>
<div class="a" style="left:614.300px;top:41px;width:1.700px;height:364px;background:#363636;"></div>

<!-- right panels -->
<div class="a" style="left:616px;top:41px;width:152px;height:364px;background:#3c3c3c;"></div>
<div class="a" style="left:616px;top:41px;width:150px;height:6.200px;background:#434343;"></div>
<div class="a" style="left:766px;top:41px;width:2px;height:364px;background:#3e3e3e;"></div>

<!-- panel header strip -->
<svg class="a" style="left:756px;top:41px;" width="8" height="6" viewBox="0 0 8 6"><path d="M2.200 1.600l1.300 1.200l-1.300 1.200M4.800 1.600l1.300 1.200l-1.300 1.200" fill="none" stroke="#a8a8a8" stroke-width="0.600"/></svg>
<!-- Color panel -->
<div class="a" style="left:616px;top:47.500px;width:150px;height:16px;background:#474747;"></div>
<div class="a" style="left:616px;top:63.400px;width:150px;height:44.200px;background:#535353;"></div>
<div class="a" style="left:641.700px;top:47.500px;width:28.200px;height:16.500px;background:#535353;"></div>
<div class="a" style="left:621.400px;top:50.500px;width:20px;height:11px;overflow:hidden;"><div class="ptab" style="left:0;top:0;transform:scale(0.8,1);">Color Guide</div></div>
<div class="ptab on" style="left:650px;top:50.500px;transform:scaleX(0.757);">Color</div>
<div class="a" style="left:676px;top:50.500px;width:19.600px;height:11px;overflow:hidden;"><div class="ptab" style="left:0;top:0;transform:scale(0.8,1);">Transform</div></div>
<div class="ptab" style="left:701px;top:50.500px;transform:scaleX(0.913);">Align</div>
<div class="a" style="left:722.200px;top:50.500px;width:20.200px;height:11px;overflow:hidden;"><div class="ptab" style="left:0;top:0;transform:scale(0.8,1);">Pathfinder</div></div>
<svg class="a" style="left:643px;top:52px;" width="5" height="8" viewBox="0 0 5 8"><path d="M1 2.600l1.400-1.400l1.400 1.400M1 5l1.400 1.400l1.400-1.400" fill="none" stroke="#d0d0d0" stroke-width="0.7"/></svg>
<div class="a mi" style="left:756px;top:53.400px;"></div>
<div class="a" style="left:619.400px;top:69.600px;width:7.900px;height:7.600px;background:#fff;overflow:hidden;"><div class="a" style="left:-2px;top:3.200px;width:12px;height:1.200px;background:#e8201c;transform:rotate(-45deg);"></div></div>
<div class="a" style="left:627.300px;top:69.600px;width:7.900px;height:7.600px;background:#000;"></div>
<div class="a" style="left:635.200px;top:69.600px;width:7.900px;height:7.600px;background:#fff;"></div>
<div class="a" style="left:620.200px;top:84.200px;width:135.700px;height:19.500px;background:linear-gradient(to right,#f01818 0%,#f87010 7%,#fbd810 16%,#b8dc20 24%,#38b838 34%,#28b888 43%,#30b0e0 52%,#2868c8 60%,#3038a8 68%,#6830a8 77%,#b828a0 85%,#e81878 93%,#f01828 100%);"></div>
<div class="a" style="left:620.200px;top:84.200px;width:135.700px;height:19.500px;background:linear-gradient(to bottom,rgba(255,255,255,.9) 0%,rgba(255,255,255,.35) 25%,rgba(255,255,255,0) 52%,rgba(0,0,0,0) 62%,rgba(0,0,0,.45) 85%,rgba(0,0,0,.9) 100%);"></div>
<!-- Symbols panel -->
<div class="a" style="left:616px;top:109.600px;width:150px;height:16.400px;background:#474747;"></div>
<div class="a" style="left:616px;top:126px;width:150px;height:131px;background:#535353;"></div>
<div class="a" style="left:685.500px;top:109.600px;width:34px;height:17px;background:#535353;"></div>
<div class="ptab" style="left:621px;top:113px;transform:scaleX(0.814);">Swatches</div>
<div class="ptab" style="left:658.700px;top:113px;transform:scaleX(0.785);">Brushes</div>
<div class="ptab on" style="left:690.800px;top:113px;transform:scaleX(0.753);">Symbols</div>
<div class="a" style="left:653px;top:111px;width:0;height:14px;border-left:1px dotted #3e3e3e;"></div>
<div class="a mi" style="left:756px;top:116px;"></div>
<div class="a" style="left:619.400px;top:128.500px;width:143px;height:116.500px;border:0.800px solid #5c5c5c;box-sizing:border-box;"></div>
<svg class="a" style="left:618px;top:128px;" width="124" height="24" viewBox="618 128 124 24">
<defs>
<pattern id="dots" width="2" height="2" patternUnits="userSpaceOnUse"><rect width="2" height="2" fill="#e4e4e4"/><rect width="1" height="1" fill="#cfcfcf"/><rect x="1" y="1" width="1" height="1" fill="#cfcfcf"/></pattern>
<radialGradient id="og" cx="0.5" cy="0.400" r="0.600"><stop offset="0" stop-color="#f8a040"/><stop offset="0.700" stop-color="#e87818"/><stop offset="1" stop-color="#f0a050"/></radialGradient>
</defs>
<g>
<rect x="620" y="130.200" width="18.200" height="18.800" fill="url(#dots)"/>
<rect x="639.700" y="130.200" width="18.200" height="18.800" fill="url(#dots)"/>
<rect x="659.400" y="130.200" width="18.200" height="18.800" fill="url(#dots)"/>
<rect x="679.100" y="130.200" width="18.200" height="18.800" fill="url(#dots)"/>
<rect x="698.800" y="130.200" width="18.200" height="18.800" fill="url(#dots)"/>
<rect x="718.500" y="130.200" width="18.200" height="18.800" fill="url(#dots)"/>
</g>
<rect x="621.300" y="135.400" width="16" height="4" fill="#9cc8ee"/>
<rect x="621.300" y="139.200" width="16" height="4.600" fill="#3c72c4"/>
<path d="M621.300 139.200h16" stroke="#2c50a0" stroke-width="0.600" stroke-dasharray="1 0.600"/>
<g fill="#050505"><circle cx="649.400" cy="139.800" r="3.300"/><circle cx="651.400" cy="143.400" r="2.400"/><circle cx="646.400" cy="138" r="1.600"/><circle cx="648.800" cy="133.200" r="1.200"/><circle cx="654.800" cy="134" r="0.900"/><circle cx="644.200" cy="145.400" r="1.300"/><circle cx="642.600" cy="137.400" r="0.700"/><circle cx="653.600" cy="137.600" r="1.200"/><path d="M649 139l-.4-5.400M651 139l3.600-4.800M648 141l-3.600 4M647 139l-4.200-1.600" stroke="#050505" stroke-width="1"/></g>
<circle cx="668.600" cy="139.800" r="8.200" fill="url(#og)" stroke="#f4a868" stroke-width="0.800"/>
<path d="M662.400 139.600h12.400" stroke="#c86010" stroke-width="1.400" stroke-dasharray="1 0.500"/>
<ellipse cx="668.600" cy="135.600" rx="5.600" ry="2.600" fill="#fbc080" opacity="0.700"/>
<path d="M681.600 132.600h3.400M681.600 132.600v4.400M694 132.400h1.400v1.600M681.600 146.600h1.200M695.200 146v.8" stroke="#6e6e6e" stroke-width="0.900" fill="none"/>
<circle cx="708.300" cy="139.800" r="6.300" fill="none" stroke="#707070" stroke-width="2.600" stroke-dasharray="3.400 0.900"/>
<circle cx="708.300" cy="139.800" r="6.300" fill="none" stroke="#9a9a9a" stroke-width="1.100" stroke-dasharray="2 2.300"/>
<g transform="translate(728.400 140)">
<g fill="#f0705c">
<ellipse rx="8.200" ry="1.700"/><ellipse rx="8.200" ry="1.700" transform="rotate(22.500)"/><ellipse rx="8.200" ry="1.700" transform="rotate(45)"/><ellipse rx="8.200" ry="1.700" transform="rotate(67.500)"/><ellipse rx="8.200" ry="1.700" transform="rotate(90)"/><ellipse rx="8.200" ry="1.700" transform="rotate(112.500)"/><ellipse rx="8.200" ry="1.700" transform="rotate(135)"/><ellipse rx="8.200" ry="1.700" transform="rotate(157.500)"/>
</g>
<circle r="5.600" fill="#f27a66"/>
<circle r="2.300" fill="#d8b070"/><circle r="1.300" fill="#b8c060"/>
</g>
</svg>
<svg class="a" style="left:618px;top:246px;" width="148" height="11" viewBox="618 246 148 11">
<g fill="none" stroke="#d4d4d4" stroke-width="0.900">
<path d="M622.400 248.600v5.600M624.200 248.600v5.600M626 248.600v5.600M627.600 249l2 5.200" />
<path d="M630.800 254.400h1" stroke-width="0.800"/>
</g>
<g fill="none" stroke="#747474" stroke-width="0.800">
<path d="M678.600 248.800v3.600h4M681.200 250.800l1.600 1.600l-1.600 1.600"/>
<path d="M693 250.400q1.400-1.800 3.200 0q1 1.400 2 1.400q1.400 0 2.200-1.400M693 252.800q1.400 1.800 3.200 0M699 253.600l-5-5"/>
<rect x="708.600" y="248.400" width="7" height="6" /><path d="M711 250.400h3.400M711 252.400h3.400" stroke-width="0.600"/>
<path d="M740.600 250h5.200v4.600h-5.200zM739.800 250h6.800M742 250v-1.200h2.400v1.200" fill="#6c6c6c"/>
</g>
<path d="M724.200 248h6.800v6.400h-3.600v-2.800h-3.200z" fill="#e4e4e4"/>
</svg>
<!-- Stroke/Gradient/Transparency -->
<div class="a" style="left:616px;top:258.800px;width:150px;height:16px;background:#474747;"></div>
<div class="a" style="left:646px;top:258.800px;width:37.600px;height:16px;background:#535353;"></div>
<div class="ptab" style="left:621.300px;top:262px;transform:scaleX(0.823);">Stroke</div>
<div class="ptab on" style="left:655px;top:262px;transform:scaleX(0.800);">Gradient</div>
<div class="ptab" style="left:689.300px;top:262px;transform:scaleX(0.839);">Transparency</div>
<svg class="a" style="left:648.400px;top:263.400px;" width="5" height="8" viewBox="0 0 5 8"><path d="M1 2.600l1.400-1.400l1.400 1.400M1 5l1.400 1.400l1.400-1.400" fill="none" stroke="#d0d0d0" stroke-width="0.700"/></svg>
<div class="a" style="left:731px;top:260px;width:0;height:14px;border-left:1px dotted #3a3a3a;"></div>
<div class="a mi" style="left:756px;top:264.800px;"></div>
<!-- Graphic Styles -->
<div class="a" style="left:616px;top:277.600px;width:150px;height:16.400px;background:#474747;"></div>
<div class="a" style="left:616px;top:277.600px;width:50px;height:16.400px;background:#535353;"></div>
<div class="ptab on" style="left:621.200px;top:281px;transform:scaleX(0.761);">Graphic Styles</div>
<div class="a mi" style="left:756px;top:283.600px;"></div>
<!-- Layers / Artboards -->
<div class="a" style="left:616px;top:296.200px;width:150px;height:15.800px;background:#474747;"></div>
<div class="a" style="left:616px;top:311.800px;width:150px;height:91.800px;background:#535353;"></div>
<div class="a" style="left:643.900px;top:296.200px;width:38.200px;height:16px;background:#535353;"></div>
<div class="ptab" style="left:621.200px;top:299.400px;transform:scaleX(0.802);">Layers</div>
<div class="ptab on" style="left:649.800px;top:299.400px;transform:scaleX(0.798);">Artboards</div>
<div class="a mi" style="left:756px;top:302px;"></div>
<div class="a" style="left:619.400px;top:315.400px;width:143.400px;height:76.400px;border:0.800px solid #5c5c5c;box-sizing:border-box;background:#525252;"></div>
<div class="a" style="left:619.400px;top:315.400px;width:143.400px;height:10.800px;border:0.600px solid #5f5f5f;box-sizing:border-box;background:#535353;"></div>
<div class="a" style="left:643.400px;top:316px;width:0.600px;height:10px;background:#666;"></div>
<div class="a" style="left:739px;top:316px;width:0;height:10px;border-left:0.600px dotted #707070;"></div>
<div class="t" style="left:622.700px;top:317px;font-size:8px;color:#f0f0f0;">1</div>
<div class="t" style="left:647.300px;top:317px;font-size:6.800px;color:#e4e4e4;transform:scaleX(0.872);">Artboard 1</div>
<svg class="a" style="left:742px;top:316px;" width="10" height="11" viewBox="742 316 10 11"><path d="M745.600 318.800h2.600l1.800 1.800v5h-4.400z" fill="#6a6a6a" stroke="#dcdcdc" stroke-width="0.800"/><path d="M743.800 318.400h1.400M744.600 317.600v1.600" stroke="#e0e0e0" stroke-width="0.600"/></svg>
<svg class="a" style="left:618px;top:393px;" width="148" height="11" viewBox="618 393 148 11">
<g fill="none" stroke="#747474" stroke-width="0.800">
<path d="M623.400 395l6.400 6M623.400 401l6.400-6M627.800 394.800h2.200v2M627.800 401.200h2.200v-2"/>
</g>
<g fill="#707070">
<path d="M699.400 394.600l3 3h-1.600v3.600h-2.800v-3.600h-1.600z"/>
<path d="M715.200 401.400l3-3h-1.600v-3.600h-2.800v3.600h-1.600z"/>
<path d="M744 396.400h5.200v5h-5.200zM743.400 395.600h6.400v.8h-6.400zM745.400 394.800h2.400v.8h-2.400z"/>
</g>
<path d="M727.200 394.800h6.800v6.200h-3.800v-2.800h-3z" fill="#e4e4e4"/>
</svg>


</body>
</html>
